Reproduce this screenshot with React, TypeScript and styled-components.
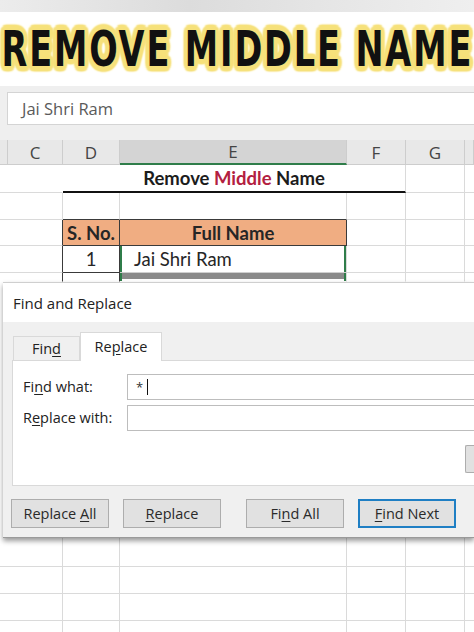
import React from "react";
import styled, {createGlobalStyle} from "styled-components";

const GlobalStyle = createGlobalStyle`
  html, body {
    margin: 0;
    padding: 0;
    background: #ffffff;
  }
  * {
    box-sizing: border-box;
  }
`;

const halo = Array.from({length: 16}, (_, i) => {
  const a = (i / 16) * Math.PI * 2;
  return `${(Math.cos(a) * 5).toFixed(1)}px ${(Math.sin(a) * 5).toFixed(1)}px 2px #f6e17c`;
}).join(", ");

const LINE = "#dadada";
const DARK = "#3a3a3a";
const GREEN = "#2f7d4a";
const COLS = "8px 55px 57px 227px 59px 59px 9px";

const Page = styled.div`
  width: 474px;
  height: 632px;
  overflow: hidden;
  background: #fff;
  font-family: "Lato", "Open Sans", sans-serif;
`;

const TopStrip = styled.div`
  height: 12px;
  background: linear-gradient(90deg, #ececec, #dcdcdc 40%, #e6e6e6 70%, #efefef);
`;

const Banner = styled.div`
  height: 74px;
  display: flex;
  align-items: center;
  justify-content: center;
  overflow: hidden;
  background: #fff;
`;

const BannerText = styled.h1`
  margin: 0;
  flex-shrink: 0;
  font-family: "DejaVu Sans Condensed", "DejaVu Sans", sans-serif;
  font-weight: 700;
  font-size: 49px;
  line-height: 1;
  letter-spacing: 2.5px;
  color: #111;
  white-space: nowrap;
  text-shadow: ${halo};
  transform: scaleX(0.76);
`;

const FormulaArea = styled.div`
  height: 54px;
  background: #efefef;
  padding: 6px 0 0 7px;
`;

const FormulaBox = styled.div`
  height: 33px;
  background: #fff;
  border: 1px solid #d4d4d4;
  border-right: none;
  display: flex;
  align-items: center;
  padding-left: 14px;
  font-family: "Open Sans", sans-serif;
  font-size: 16.5px;
  color: #5a5a5a;
`;

const Grid = styled.div`
  display: grid;
  grid-template-columns: ${COLS};
`;

const Cell = styled.div<{
  $h: number;
  $r?: string;
  $b?: string;
  $bw?: number;
  $span?: number;
  $bg?: string;
  $align?: string;
  $green?: boolean;
  $pad?: number;
}>`
  height: ${(p) => p.$h}px;
  grid-column: span ${(p) => p.$span ?? 1};
  border-right: 1px solid ${(p) => p.$r ?? LINE};
  border-bottom: ${(p) => p.$bw ?? 1}px solid ${(p) => p.$b ?? LINE};
  background: ${(p) => p.$bg ?? "#fff"};
  display: flex;
  align-items: center;
  justify-content: ${(p) => p.$align ?? "center"};
  padding: 0 ${(p) => p.$pad ?? 14}px;
  font-size: 18.5px;
  color: #262626;
  white-space: nowrap;
  overflow: hidden;
  box-shadow: ${(p) =>
    p.$green ? `inset 2px 0 ${GREEN}, inset -2px 0 ${GREEN}` : "none"};
`;

const HeadCell = styled.div<{$active?: boolean}>`
  height: 25px;
  background: ${(p) => (p.$active ? "#d4d4d4" : "#e8e8e8")};
  border-right: 1px solid #cdcdcd;
  border-bottom: ${(p) => (p.$active ? `2px solid ${GREEN}` : "1px solid #cdcdcd")};
  display: flex;
  align-items: center;
  justify-content: center;
  font-family: "Open Sans", sans-serif;
  font-size: 17px;
  color: #444;
`;

const Title = styled.span`
  font-weight: 700;
  font-size: 18.5px;
  color: #1c1c1c;
`;

const Red = styled.span`
  color: #b3203f;
`;

const Bold = styled.span`
  font-weight: 700;
`;

const ShadowBar = styled.div`
  width: 100%;
  height: 6px;
  margin: 0 2px;
  align-self: flex-start;
  background: #8a8a8a;
`;

const Dialog = styled.div`
  position: relative;
  z-index: 1;
  margin-left: 3px;
  width: 471px;
  height: 256px;
  background: #f0f0f0;
  border-top: 1px solid #cfcfcf;
  border-bottom: 1px solid #9a9a9a;
  box-shadow: 0 3px 5px rgba(0, 0, 0, 0.4);
  font-family: "Open Sans", sans-serif;
  color: #222;
  display: flex;
  flex-direction: column;
`;

const TitleBar = styled.div`
  height: 39px;
  background: #fff;
  display: flex;
  align-items: center;
  padding-left: 10px;
  font-size: 15px;
`;

const Body = styled.div`
  padding: 10px 0 0 9px;
  display: flex;
  flex-direction: column;
`;

const Tabs = styled.div`
  display: flex;
  align-items: flex-end;
  height: 29px;
  padding-left: 1px;
`;

const Tab = styled.div<{$active?: boolean}>`
  height: ${(p) => (p.$active ? 29 : 25)}px;
  width: ${(p) => (p.$active ? 82 : 67)}px;
  line-height: ${(p) => (p.$active ? 28 : 23)}px;
  text-align: center;
  font-size: 14.5px;
  background: ${(p) => (p.$active ? "#fff" : "#f0f0f0")};
  border: 1px solid #d9d9d9;
  border-bottom: ${(p) => (p.$active ? "none" : "1px solid #d9d9d9")};
  position: relative;
  z-index: ${(p) => (p.$active ? 2 : 0)};
`;

const Panel = styled.div`
  margin-top: -1px;
  height: 126px;
  background: #fff;
  border: 1px solid #d9d9d9;
  border-right: none;
  padding: 13px 0 0 10px;
  display: flex;
  flex-direction: column;
`;

const FieldGrid = styled.div`
  display: grid;
  grid-template-columns: 104px 1fr;
  row-gap: 5px;
`;

const Label = styled.div`
  line-height: 26px;
  font-size: 14.5px;
  color: #222;
  white-space: nowrap;
`;

const Input = styled.div`
  height: 26px;
  border: 1px solid #bdbdbd;
  border-right: none;
  display: flex;
  align-items: center;
  padding-left: 8px;
  font-size: 13px;
  color: #333;
`;

const Caret = styled.span`
  display: inline-block;
  width: 1px;
  height: 16px;
  margin-left: 4px;
  background: #111;
`;

const OptionsStub = styled.div`
  align-self: flex-end;
  margin-top: 14px;
  width: 9px;
  height: 28px;
  background: #e1e1e1;
  border: 1px solid #adadad;
  border-right: none;
  border-radius: 2px 0 0 2px;
`;

const Buttons = styled.div`
  display: flex;
  margin: 13px 0 0 -1px;
`;

const Button = styled.div<{$primary?: boolean; $gap?: number}>`
  width: 98px;
  height: 29px;
  margin-left: ${(p) => p.$gap ?? 0}px;
  background: #e1e1e1;
  border: ${(p) => (p.$primary ? "2px solid #1f7fc4" : "1px solid #adadad")};
  line-height: ${(p) => (p.$primary ? 25 : 27)}px;
  text-align: center;
  font-size: 14.5px;
  color: #2a2a2a;
  white-space: nowrap;
`;

const Key = styled.span`
  text-decoration: underline;
  text-underline-offset: 2px;
`;

const cols = [0, 1, 2, 3, 4, 5, 6];

const BlankRow = ({h}: {h: number}) => (
  <>
    {cols.map((c) => (
      <Cell key={c} $h={h} />
    ))}
  </>
);

export default function App() {
  return (
    <Page>
      <GlobalStyle />
      <TopStrip />
      <Banner>
        <BannerText>REMOVE MIDDLE NAME</BannerText>
      </Banner>
      <FormulaArea>
        <FormulaBox>Jai Shri Ram</FormulaBox>
      </FormulaArea>

      <Grid>
        <HeadCell />
        <HeadCell>C</HeadCell>
        <HeadCell>D</HeadCell>
        <HeadCell $active>E</HeadCell>
        <HeadCell>F</HeadCell>
        <HeadCell>G</HeadCell>
        <HeadCell />

        <Cell $h={28} />
        <Cell $h={28} $r="#fff" />
        <Cell $h={28} $span={3} $b="#111" $bw={2}>
          <Title>
            Remove <Red>Middle</Red> Name
          </Title>
        </Cell>
        <Cell $h={28} />
        <Cell $h={28} />

        <Cell $h={27} />
        <Cell $h={27} />
        <Cell $h={27} $b={DARK} />
        <Cell $h={27} $b={DARK} />
        <Cell $h={27} />
        <Cell $h={27} />
        <Cell $h={27} />

        <Cell $h={26} />
        <Cell $h={26} $r={DARK} />
        <Cell $h={26} $r={DARK} $b={DARK} $bg="#f0ad82" $pad={0}>
          <Bold>S. No.</Bold>
        </Cell>
        <Cell $h={26} $r={DARK} $b={DARK} $bg="#f0ad82">
          <Bold>Full Name</Bold>
        </Cell>
        <Cell $h={26} />
        <Cell $h={26} />
        <Cell $h={26} />

        <Cell $h={27} />
        <Cell $h={27} $r={DARK} />
        <Cell $h={27} $r={DARK} $b={DARK}>
          1
        </Cell>
        <Cell $h={27} $align="flex-start" $green $b="#cfcfcf">
          Jai Shri Ram
        </Cell>
        <Cell $h={27} />
        <Cell $h={27} />
        <Cell $h={27} />

        <Cell $h={9} $b="#fff" />
        <Cell $h={9} $r={DARK} $b="#fff" />
        <Cell $h={9} $r={DARK} $b="#fff" />
        <Cell $h={9} $green $b="#fff" $pad={0}>
          <ShadowBar />
        </Cell>
        <Cell $h={9} $b="#fff" />
        <Cell $h={9} $b="#fff" />
        <Cell $h={9} $b="#fff" />
      </Grid>

      <Dialog>
        <TitleBar>Find and Replace</TitleBar>
        <Body>
          <Tabs>
            <Tab>
              Fin<Key>d</Key>
            </Tab>
            <Tab $active>
              Re<Key>p</Key>lace
            </Tab>
          </Tabs>
          <Panel>
            <FieldGrid>
              <Label>
                Fi<Key>n</Key>d what:
              </Label>
              <Input>
                *<Caret />
              </Input>
              <Label>
                R<Key>e</Key>place with:
              </Label>
              <Input />
            </FieldGrid>
            <OptionsStub />
          </Panel>
          <Buttons>
            <Button>
              Replace <Key>A</Key>ll
            </Button>
            <Button $gap={14}>
              <Key>R</Key>eplace
            </Button>
            <Button $gap={25}>
              Fi<Key>n</Key>d All
            </Button>
            <Button $gap={14} $primary>
              <Key>F</Key>ind Next
            </Button>
          </Buttons>
        </Body>
      </Dialog>

      <Grid>
        <BlankRow h={29} />
        <BlankRow h={27} />
        <BlankRow h={27} />
        <BlankRow h={20} />
      </Grid>
    </Page>
  );
}
